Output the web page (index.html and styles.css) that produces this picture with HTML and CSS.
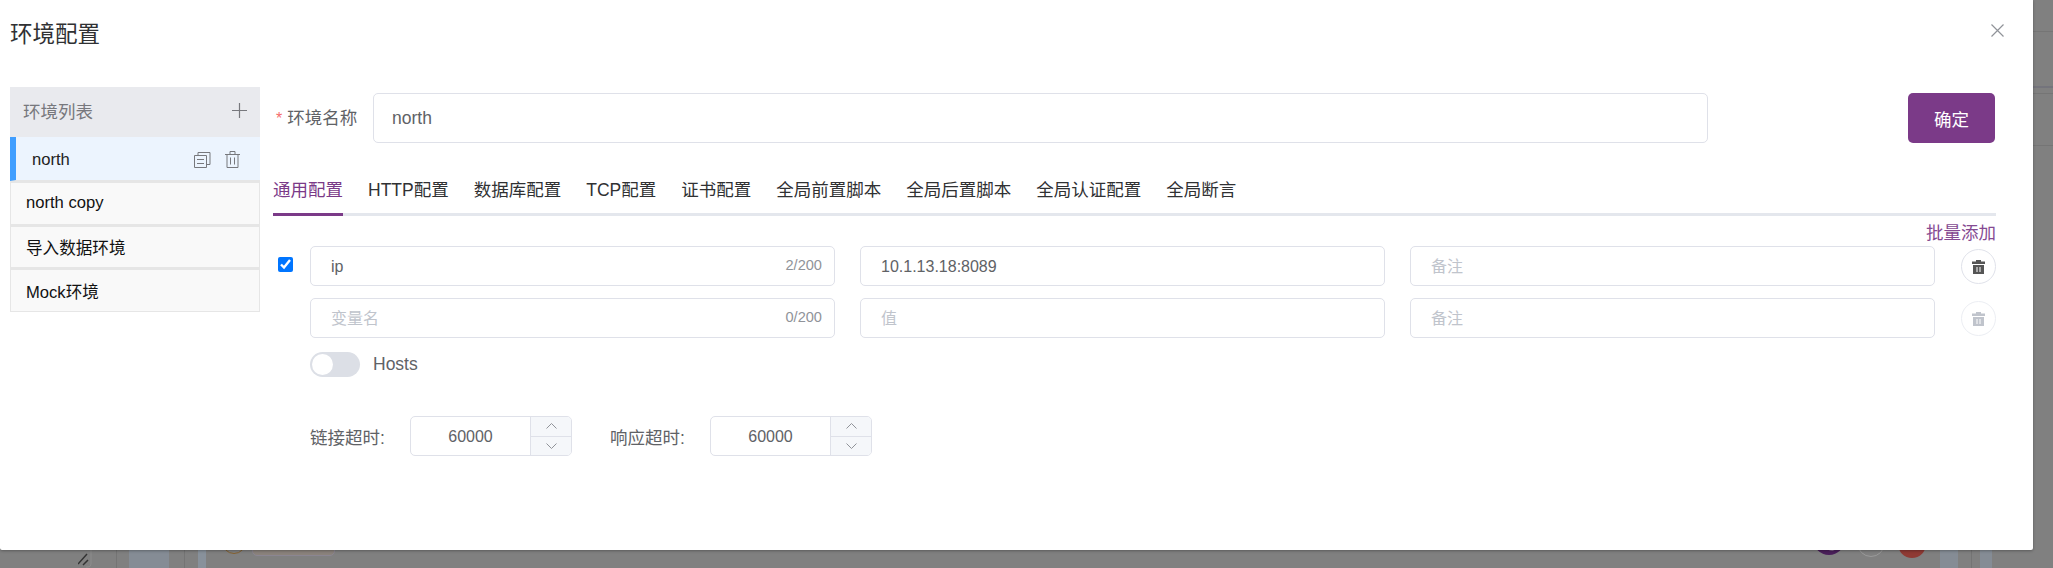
FILE: index.html
```html
<!DOCTYPE html>
<html lang="zh-CN">
<head>
<meta charset="utf-8">
<title>环境配置</title>
<link rel="stylesheet" href="styles.css">
</head>
<body>
<div class="page">
  <section class="dialog">
    <header class="dialog-head">
      <h1 class="dialog-title">环境配置</h1>
      <svg class="close" width="13" height="13" viewBox="0 0 13 13"><path d="M.5.5l12 12M12.5.5l-12 12"/></svg>
    </header>
    <div class="dialog-body">
      <aside class="env-list">
        <div class="env-head">
          <span>环境列表</span>
          <svg class="plus" width="15" height="15" viewBox="0 0 15 15"><path d="M7.500 0v15M0 7.500h15"/></svg>
        </div>
        <div class="env-item env-active">
          <span class="env-name">north</span>
          <svg class="line-icon" width="17" height="17" viewBox="0 0 17 17"><path d="M.5 4.500h12v12H.5zM3 8.500h7M3 12.500h7M4 4.500V1.500h12v12h-3"/></svg>
          <svg class="line-icon" width="15" height="17" viewBox="0 0 15 17"><path d="M0 3.500h15M5 3.500v-3h5v3M2 3.500v13h11v-13M5.500 6.500v7M9.500 6.500v7"/></svg>
        </div>
        <div class="env-item">north copy</div>
        <div class="env-item">导入数据环境</div>
        <div class="env-item">Mock环境</div>
      </aside>
      <main class="editor">
        <div class="name-row">
          <label class="name-label"><span class="req">*</span>环境名称</label>
          <input class="field name-input" type="text" value="north">
          <button class="confirm" type="button">确定</button>
        </div>
        <nav class="tabs">
          <span class="tab tab-active">通用配置</span>
          <span class="tab">HTTP配置</span>
          <span class="tab">数据库配置</span>
          <span class="tab">TCP配置</span>
          <span class="tab">证书配置</span>
          <span class="tab">全局前置脚本</span>
          <span class="tab">全局后置脚本</span>
          <span class="tab">全局认证配置</span>
          <span class="tab">全局断言</span>
        </nav>
        <div class="batch"><span>批量添加</span></div>
        <div class="vars">
          <input class="check" type="checkbox" checked>
          <div class="counted"><input class="bare" type="text" value="ip"><span class="count">2/200</span></div>
          <input class="field" type="text" value="10.1.13.18:8089">
          <input class="field" type="text" placeholder="备注">
          <button class="del" type="button"><svg width="13" height="14" viewBox="0 0 13 14"><path d="M4 0h5v1.500h4V4H0V1.500h4zM1 5h11v9H1z"/><path class="slit" d="M5 7v5M8 7v5"/></svg></button>

          <span></span>
          <div class="counted"><input class="bare" type="text" placeholder="变量名"><span class="count">0/200</span></div>
          <input class="field" type="text" placeholder="值">
          <input class="field" type="text" placeholder="备注">
          <button class="del del-off" type="button"><svg width="13" height="14" viewBox="0 0 13 14"><path d="M4 0h5v1.500h4V4H0V1.500h4zM1 5h11v9H1z"/><path class="slit" d="M5 7v5M8 7v5"/></svg></button>
        </div>
        <div class="hosts">
          <span class="switch"><span class="knob"></span></span>
          <span>Hosts</span>
        </div>
        <div class="timeouts">
          <span class="t-label">链接超时:</span>
          <div class="number">
            <input class="bare num-input" type="text" value="60000">
            <div class="spin">
              <span class="spin-btn"><svg width="11" height="6" viewBox="0 0 11 6"><path d="M.5 5.500l5-5 5 5"/></svg></span>
              <span class="spin-btn"><svg width="11" height="6" viewBox="0 0 11 6"><path d="M.5.500l5 5 5-5"/></svg></span>
            </div>
          </div>
          <span class="t-label">响应超时:</span>
          <div class="number">
            <input class="bare num-input" type="text" value="60000">
            <div class="spin">
              <span class="spin-btn"><svg width="11" height="6" viewBox="0 0 11 6"><path d="M.5 5.500l5-5 5 5"/></svg></span>
              <span class="spin-btn"><svg width="11" height="6" viewBox="0 0 11 6"><path d="M.5.500l5 5 5-5"/></svg></span>
            </div>
          </div>
        </div>
      </main>
    </div>
  </section>
  <div class="rail">
    <i class="rail-line r1"></i>
    <i class="rail-line r2"></i>
    <i class="rail-line r3"></i>
    <i class="rail-line r4"></i>
  </div>
  <div class="strip">
    <svg class="handle" width="14" height="18" viewBox="0 0 14 18"><path class="grip" d="M0 14L9 4M5 15l5-5"/><path class="edge" d="M13 0v14q0 3-3 3H8"/></svg>
    <i class="vline l1"></i>
    <i class="block b1"></i>
    <i class="vline l2"></i>
    <i class="block b2"></i>
    <i class="ring-orange"></i>
    <i class="peach"></i>
    <svg class="avatar" width="32" height="32" viewBox="0 0 32 32"><circle cx="16" cy="16" r="16" fill="#4a1f5a"/><path d="M14 25q8 4 13-3" fill="none" stroke="#b3a9b8" stroke-width="2"/></svg>
    <i class="ring-grey"></i>
    <i class="dot-red"></i>
    <i class="block b3"></i>
    <i class="vline l3"></i>
    <i class="block b4"></i>
  </div>
</div>
</body>
</html>
```

FILE: styles.css
```css
* { box-sizing: border-box; }
html, body { margin: 0; padding: 0; }
body {
  background: #808080;
  font-family: "Liberation Sans", "Noto Sans CJK SC", sans-serif;
  color: #606266;
}
.page {
  display: grid;
  grid-template-columns: 2033px 20px;
  grid-template-rows: 550px 18px;
  width: 2053px;
  height: 568px;
  overflow: hidden;
  background: #808080;
}

/* dialog */
.dialog {
  position: relative;
  z-index: 1;
  display: flex;
  flex-direction: column;
  background: #fff;
  border-radius: 0 0 2px 2px;
  box-shadow: 0 1px 3px rgba(0, 0, 0, .3);
}
.dialog-head {
  display: flex;
  align-items: center;
  justify-content: space-between;
  height: 67px;
  padding: 0 29px 0 10px;
}
.dialog-title {
  margin: 2px 0 0;
  font-size: 22.5px;
  line-height: 30px;
  font-weight: 400;
  color: #303133;
}
.close { fill: none; stroke: #909399; stroke-width: 1.2; margin-top: -6px; }
.dialog-body {
  display: flex;
  align-items: flex-start;
  padding: 20px 37px 0 10px;
}

/* environment list */
.env-list { flex: 0 0 250px; width: 250px; margin-right: 13px; }
.env-head {
  display: flex;
  align-items: center;
  justify-content: space-between;
  height: 50px;
  padding: 0 13px 4px;
  background: #e9eaee;
  font-size: 17.5px;
  color: #77787d;
}
.plus { fill: none; stroke: #77787d; stroke-width: 1.2; }
.env-item {
  display: flex;
  align-items: center;
  height: 43.7px;
  padding-left: 15px;
  background: #f9f9f9;
  border: 1px solid #e6e6e6;
  border-top-width: 2px;
  font-size: 16.6px;
  color: #111;
}
.env-active {
  gap: 14px;
  height: 44px;
  padding: 2px 20px 0 16px;
  background: #ecf4fe;
  border: 0;
  border-left: 6px solid #409eff;
  border-bottom: 1px solid #e6e6e6;
  color: #222;
}
.env-name { flex: 1; }
.line-icon { fill: none; stroke: #77787d; stroke-width: 1; }

/* editor */
.editor { flex: 1; min-width: 0; }
.name-row {
  display: flex;
  align-items: center;
  height: 50px;
  margin-top: 6px;
  padding: 0 1px 0 3px;
}
.name-label {
  width: 97px;
  margin-top: -3px;
  font-size: 17.5px;
  color: #606266;
  white-space: nowrap;
}
.req { color: #f56c6c; margin-right: 5px; font-size: 16px; }
.field {
  min-width: 0;
  height: 100%;
  padding: 1px 20px 0;
  background: #fff;
  border: 1px solid #dfe1e9;
  border-radius: 5px;
  outline: 0;
  font: inherit;
  font-size: 16px;
  color: #606266;
}
.field::placeholder, .bare::placeholder { color: #c0c4cc; opacity: 1; }
.name-input { width: 1335px; font-size: 17.5px; padding: 0 18px; }
.confirm {
  width: 87px;
  height: 50px;
  margin-left: auto;
  padding: 0;
  background: #7b3a88;
  border: 0;
  border-radius: 5px;
  color: #fff;
  font: inherit;
  font-size: 17.5px;
}

.tabs {
  display: flex;
  gap: 25px;
  height: 51px;
  margin-top: 22px;
  border-bottom: 3px solid #e4e7ed;
}
.tab {
  height: 51px;
  padding-top: 15px;
  font-size: 17.5px;
  line-height: 20px;
  color: #303133;
  white-space: nowrap;
}
.tab-active { color: #7b3a88; border-bottom: 3px solid #7b3a88; }

.batch {
  display: flex;
  justify-content: flex-end;
  height: 30px;
  padding-top: 5px;
  font-size: 17.5px;
  line-height: 25px;
  color: #854a92;
}

.vars {
  display: grid;
  grid-template-columns: 37px 525px 525px 525px 35px;
  grid-auto-rows: 40px;
  column-gap: 25px;
  row-gap: 12px;
  align-items: center;
  margin-left: 0;
}
.vars { column-gap: 0; grid-template-columns: 37px 525px 25px 525px 25px 525px 26px 35px; }
.vars > :nth-child(5n+1) { grid-column: 1; }
.vars > :nth-child(5n+2) { grid-column: 2; }
.vars > :nth-child(5n+3) { grid-column: 4; }
.vars > :nth-child(5n+4) { grid-column: 6; }
.vars > :nth-child(5n+5) { grid-column: 8; }
.check {
  width: 15px;
  height: 15px;
  margin: -3px 0 0 5px;
  accent-color: #0075ff;
}
.counted {
  display: flex;
  align-items: center;
  height: 40px;
  padding: 0 12px 0 20px;
  border: 1px solid #dfe1e9;
  border-radius: 5px;
}
.bare {
  flex: 1;
  min-width: 0;
  height: 100%;
  padding: 1px 0 0;
  border: 0;
  outline: 0;
  background: transparent;
  font: inherit;
  font-size: 16px;
  color: #606266;
}
.count { margin-top: -2px; font-size: 14.6px; color: #909399; }
.del {
  display: flex;
  align-items: center;
  justify-content: center;
  width: 35px;
  height: 35px;
  padding: 0;
  margin-top: 1px;
  background: #fff;
  border: 1px solid #e0e2ea;
  border-radius: 50%;
}
.del svg { fill: #555; }
.slit { stroke: #fff; fill: none; stroke-width: 1; }
.del-off { border-color: #eceef3; }
.del-off svg { fill: #c0c4cc; }

.hosts {
  display: flex;
  align-items: center;
  gap: 13px;
  margin: 14px 0 0 37px;
  height: 25px;
  font-size: 17.5px;
  color: #606266;
}
.switch {
  display: flex;
  align-items: center;
  width: 50px;
  height: 25px;
  padding: 2px;
  background: #dcdfe6;
  border-radius: 13px;
}
.knob { width: 21px; height: 21px; border-radius: 50%; background: #fff; }

.timeouts {
  display: flex;
  align-items: center;
  height: 40px;
  margin: 39px 0 0 37px;
}
.t-label { width: 100px; font-size: 17.5px; color: #606266; white-space: nowrap; }
.number {
  display: flex;
  width: 162px;
  height: 40px;
  margin-right: 38px;
  border: 1px solid #dfe1e9;
  border-radius: 5px;
  overflow: hidden;
}
.num-input { text-align: center; }
.spin {
  display: flex;
  flex-direction: column;
  flex: 0 0 41px;
  background: #f5f7fa;
  border-left: 1px solid #dfe1e9;
}
.spin-btn {
  display: flex;
  flex: 1;
  align-items: center;
  justify-content: center;
}
.spin-btn + .spin-btn { border-top: 1px solid #dfe1e9; }
.spin-btn svg { fill: none; stroke: #909399; stroke-width: 1; }

/* right rail of the page behind the overlay */
.rail { display: flex; flex-direction: column; }
.rail-line { display: block; height: 1px; background: #757575; }
.r1 { margin-top: 31px; }
.r2 { margin-top: 54px; height: 2px; background: #74747c; }
.r3 { margin-top: 5px; }
.r4 { margin-top: 51px; }

/* strip of the page behind the overlay */
.strip {
  grid-column: 1 / 3;
  display: flex;
  align-items: flex-start;
  height: 18px;
  padding-left: 78px;
}
.handle { flex: none; }
.grip { fill: none; stroke: #333; stroke-width: 1.5; }
.edge { fill: none; stroke: #8c8c8c; stroke-width: 1; }
.vline { flex: none; width: 1px; height: 18px; background: #747474; }
.block { flex: none; height: 18px; background: #858c95; }
.l1 { margin-left: 24px; }
.b1 { width: 40px; margin-left: 12px; }
.l2 { margin-left: 15px; }
.b2 { width: 8px; margin-left: 13px; background: #88919b; }
.ring-orange {
  flex: none;
  width: 24px;
  height: 24px;
  margin: -20px 0 0 16px;
  border: 1px solid #86622f;
  border-radius: 50%;
}
.peach {
  flex: none;
  width: 83px;
  height: 24px;
  margin: -18px 0 0 6px;
  background: #8a827c;
  border: 1px solid #8b8692;
  border-radius: 5px;
}
.avatar { flex: none; margin: -27px 0 0 auto; }
.ring-grey {
  flex: none;
  width: 28px;
  height: 28px;
  margin: -21px 0 0 12px;
  border: 1px solid #9a9a9a;
  border-radius: 50%;
}
.dot-red {
  flex: none;
  width: 28px;
  height: 28px;
  margin: -20px 0 0 13px;
  background: #8f3a34;
  border-radius: 50%;
}
.b3 { width: 18px; margin-left: 14px; }
.l3 { margin-left: 13px; }
.b4 { width: 12px; margin: 0 61px 0 8px; }
```
